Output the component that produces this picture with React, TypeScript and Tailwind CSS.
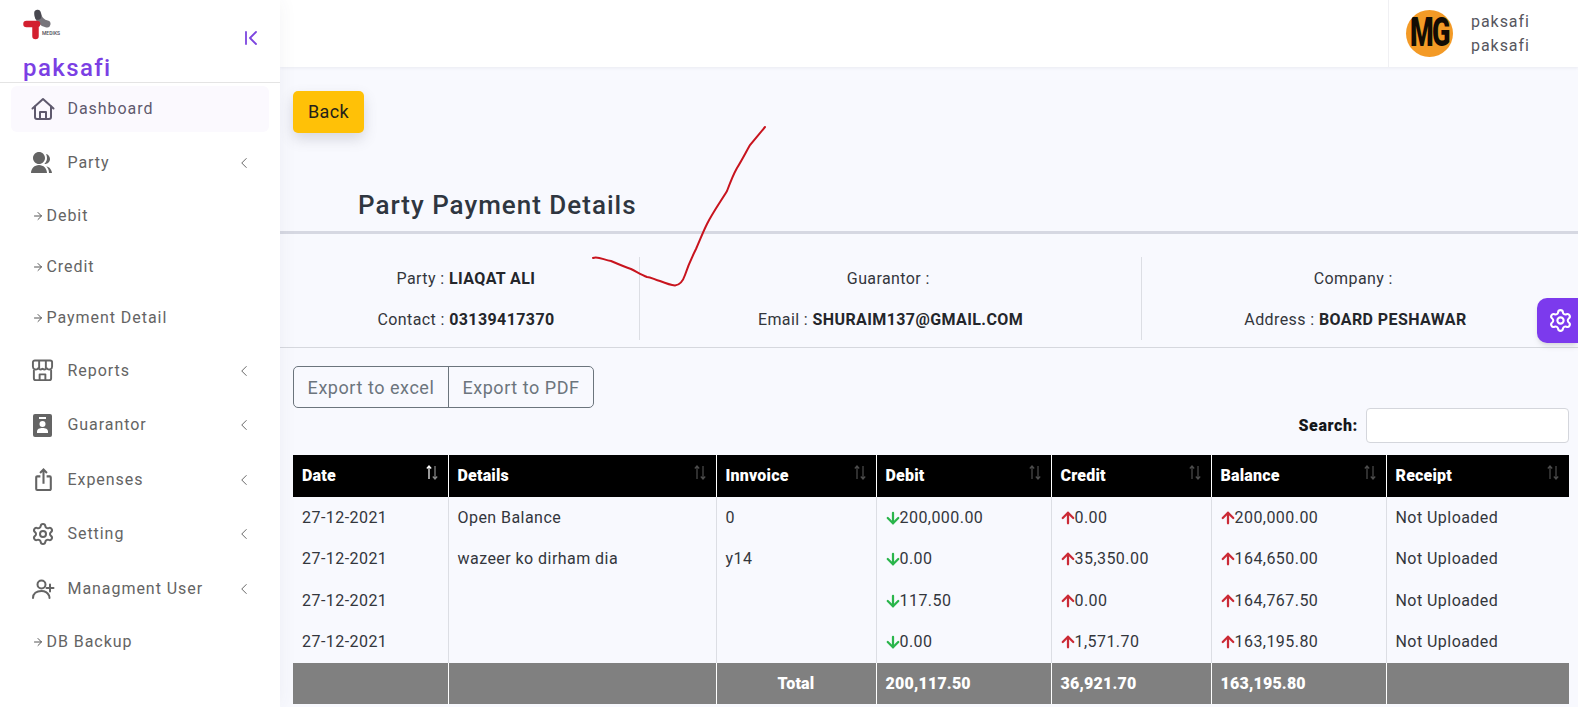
import React from "react";
import { ChevronFirst, ChevronLeft, ArrowRight, ArrowUp, ArrowDown, Settings } from "lucide-react";
import { RiGroupFill } from "react-icons/ri";
import { MdIosShare } from "react-icons/md";

const HomeIcon = () => (
  <svg width="24" height="24" viewBox="0 0 24 24" fill="none" stroke="currentColor" strokeWidth="2" strokeLinejoin="round" strokeLinecap="round">
    <path d="M1.5 11.5 12 2l10.5 9.5" />
    <path d="M4 9.5V20a2 2 0 0 0 2 2h12a2 2 0 0 0 2-2V9.5" />
    <path d="M9 22v-7h6v7" />
  </svg>
);

const StoreIcon = () => (
  <svg width="23" height="23" viewBox="0 0 24 24" fill="none" stroke="currentColor" strokeWidth="2" strokeLinejoin="round" strokeLinecap="round">
    <path d="M4 1.5h16a2 2 0 0 1 2 2V8a3 3 0 0 1-5.5 1.6 3.4 3.4 0 0 1-4.5.6 3.4 3.4 0 0 1-4.5-.6A3 3 0 0 1 2 8V3.5a2 2 0 0 1 2-2z" />
    <path d="M8.5 2v7M15.5 2v7" />
    <path d="M3 12v8a2 2 0 0 0 2 2h14a2 2 0 0 0 2-2v-8" />
    <path d="M9 22v-6h6v6" />
  </svg>
);

const BadgeIcon = () => (
  <svg width="19" height="23" viewBox="0 0 19 23" className="ml-[2px]">
    <rect width="19" height="23" rx="2" fill="currentColor" />
    <rect x="6" y="3" width="7" height="2" fill="#ffffff" />
    <circle cx="9.5" cy="10" r="3" fill="#ffffff" />
    <path d="M4 19v-1.5C4 15 6.500 14 9.500 14s5.500 1 5.500 3.500V19z" fill="#ffffff" />
  </svg>
);

const UserPlusIcon = () => (
  <svg width="24" height="20" viewBox="0 0 24 20" fill="none" stroke="currentColor" strokeWidth="2" strokeLinecap="round">
    <circle cx="10.500" cy="5.500" r="4" />
    <path d="M2 19c0-4.500 3.500-7 8.500-7 3.500 0 6 1.500 7.500 4.500.3.800.5 1.500.5 2.500" />
    <path d="M15.500 9h7M19 5.500v7" />
  </svg>
);

const Main = ({ icon, label, active }: { icon: React.ReactNode; label: string; active?: boolean }) => (
  <div className={`flex items-center ${active ? "mx-[11px] mb-[4px] h-[46px] rounded-md bg-[#fbf9fe] px-[20px] text-[#5f5a6e]" : "h-[54.5px] px-[31px] text-[#646464]"}`}>
    <span className="flex w-[36.5px] shrink-0 items-center">{icon}</span>
    <span className="flex-1 text-[16px] tracking-[0.95px]">{label}</span>
    {!active && <ChevronLeft size={18} strokeWidth={1.3} className="mr-[-4px]" />}
  </div>
);

const Sub = ({ label }: { label: string }) => (
  <div className="flex h-[51px] items-center pl-[32px] text-[16px] tracking-[0.95px] text-[#646464]">
    <ArrowRight size={12} strokeWidth={2} className="mr-[2.5px] text-[#555555]" />
    {label}
  </div>
);

const Info = ({ a, b, c, d, last }: { a: string; b: string; c: string; d: string; last?: boolean }) => (
  <div className={`flex h-[83px] flex-col items-center pt-[1px] text-[16px] tracking-[0.4px] text-[#33363c] ${last ? "" : "border-r border-[#dcdee4]"}`}>
    <div className="flex h-[41px] items-center">{a}&nbsp;<b className="font-bold text-[#24262b]">{b}</b></div>
    <div className="flex h-[41px] items-center pt-[1px]">{c}&nbsp;<b className="font-bold text-[#24262b]">{d}</b></div>
  </div>
);

const Sort = ({ on }: { on?: boolean }) => (
  <svg width="14" height="15" viewBox="0 0 14 15" fill="none" strokeWidth="1.2" className="absolute right-[9px] top-[10px]">
    <path d="M4 14V1M1.800 3.500 4 1l2.200 2.500" stroke={on ? "#ffffff" : "#4d4d4d"} />
    <path d="M10 1v13M7.800 11.500 10 14l2.200-2.500" stroke={on ? "#8a8a8a" : "#4d4d4d"} />
  </svg>
);

const Val = ({ up, v }: { up?: boolean; v: string }) => (
  <span className="flex items-center">
    {up ? <ArrowUp size={18} strokeWidth={3} className="ml-[-2px] mr-[-2px] text-[#cb2a36]" /> : <ArrowDown size={18} strokeWidth={3} className="ml-[-2px] mr-[-2px] text-[#2ab54b]" />}
    {v}
  </span>
);

const heads = ["Date", "Details", "Innvoice", "Debit", "Credit", "Balance", "Receipt"];
const rows = [
  ["Open Balance", "0", "200,000.00", "0.00", "200,000.00"],
  ["wazeer ko dirham dia", "y14", "0.00", "35,350.00", "164,650.00"],
  ["", "", "117.50", "0.00", "164,767.50"],
  ["", "", "0.00", "1,571.70", "163,195.80"],
];

export default function App() {
  return (
    <div className="relative flex h-[707px] w-[1578px] overflow-hidden bg-[#f8f9fe] font-['Roboto',sans-serif]">
      <aside className="z-10 w-[280px] shrink-0 bg-white shadow-[0_0_18px_rgba(60,60,90,0.06)]">
        <div className="flex h-[83px] justify-between border-b border-[#e4e4e4] pl-[23px] pr-[17px]">
          <div className="flex flex-col">
            <svg width="38" height="32" viewBox="0 0 38 32" fill="none" className="mt-[9px]" strokeLinecap="round">
              <path d="M15 6C16 11 19.500 14 24 15" stroke="#77757b" strokeWidth="7" />
              <path d="M14.500 4 15 7.500" stroke="#48484f" strokeWidth="6.500" />
              <path d="M3.500 15H14" stroke="#d3202f" strokeWidth="6.500" />
              <path d="M12.500 16V27" stroke="#d3202f" strokeWidth="6.500" />
              <text x="19" y="26" fontSize="5" fontWeight="500" fill="#4b4b55" fontFamily="Roboto, sans-serif">MEDIKS</text>
            </svg>
            <span className="mt-[13px] text-[24px] leading-[28px] font-medium tracking-[1.4px] text-[#7b3fe4]">paksafi</span>
          </div>
          <ChevronFirst size={24} strokeWidth={1.8} className="mt-[26px] text-[#7c45df]" />
        </div>
        <nav className="pt-[3px] text-[#646464]">
          <Main active icon={<HomeIcon />} label="Dashboard" />
          <Main icon={<RiGroupFill size={24} className="-ml-[2px]" />} label="Party" />
          <Sub label="Debit" />
          <Sub label="Credit" />
          <Sub label="Payment Detail" />
          <Main icon={<StoreIcon />} label="Reports" />
          <Main icon={<BadgeIcon />} label="Guarantor" />
          <Main icon={<MdIosShare size={25} />} label="Expenses" />
          <Main icon={<Settings size={24} strokeWidth={2} />} label="Setting" />
          <Main icon={<UserPlusIcon />} label="Managment User" />
          <Sub label="DB Backup" />
        </nav>
      </aside>

      <main className="min-w-0 flex-1">
        <header className="flex h-[67px] justify-end bg-white shadow-[0_1px_3px_rgba(60,60,90,0.08)]">
          <div className="flex w-[190px] items-center border-l border-[#f0f0f3] pl-[17px]">
            <div className="flex h-[47px] w-[47px] items-center justify-center overflow-hidden rounded-full bg-[#f39a26]">
              <span className="scale-y-[1.5] text-[27px] leading-none font-black tracking-[-1.5px] text-[#120c04]">MG</span>
            </div>
            <div className="ml-[18px] text-[16px] leading-[24px] tracking-[0.95px] text-[#56565e]">
              <div>paksafi</div>
              <div>paksafi</div>
            </div>
          </div>
        </header>

        <div className="pl-[13px] pt-[24px]">
          <button className="h-[42px] w-[71px] rounded-[5px] bg-[#ffc107] pb-[1px] text-[18px] tracking-[0.4px] text-[#25211a] shadow-[0_6px_14px_rgba(80,80,100,0.2)]">Back</button>
        </div>
        <h1 className="mt-[50px] h-[44px] pl-[78px] text-[26px] leading-[44px] font-medium tracking-[1px] text-[#2f3640]">Party Payment Details</h1>
        <div className="mt-[4px] h-[3px] bg-[#d6d8e2]" />

        <div className="border-b border-[#d6d8de] pb-[7px] pl-[13px] pr-[9px] pt-[23px]">
          <div className="grid grid-cols-[347px_502px_427px]">
            <Info a="Party :" b="LIAQAT ALI" c="Contact :" d="03139417370" />
            <Info a="Guarantor :" b="" c="Email :" d="SHURAIM137@GMAIL.COM" />
            <Info last a="Company :" b="" c="Address :" d="BOARD PESHAWAR" />
          </div>
        </div>

        <div className="pl-[13px] pr-[9px] pt-[18px]">
          <div className="flex h-[42px] w-[301px] rounded-[5px] border border-[#6c757d] text-[18px] tracking-[0.55px] text-[#6c757d]">
            <div className="flex w-[155px] items-center justify-center border-r border-[#6c757d]">Export to excel</div>
            <div className="flex flex-1 items-center justify-center">Export to PDF</div>
          </div>
          <div className="flex h-[35px] items-center justify-end">
            <span className="mr-[8px] text-[16px] font-black tracking-[0.6px] text-[#14161a]">Search:</span>
            <input className="h-[35px] w-[203px] rounded border border-[#d4d6dc] bg-white" />
          </div>

          <table className="mt-[12px] w-[1276px] table-fixed border-collapse text-[16px] tracking-[0.45px] text-[#33363c]">
            <colgroup>
              <col className="w-[155px]" />
              <col className="w-[268px]" />
              <col className="w-[160px]" />
              <col className="w-[175px]" />
              <col className="w-[160px]" />
              <col className="w-[175px]" />
              <col className="w-[183px]" />
            </colgroup>
            <thead>
              <tr className="h-[42px] bg-black text-white">
                {heads.map((h, i) => (
                  <th key={h} className="relative border-l border-white px-[9px] text-left font-black tracking-[0.2px] first:border-l-0">
                    {h}
                    <Sort on={i === 0} />
                  </th>
                ))}
              </tr>
            </thead>
            <tbody>
              {rows.map((r, i) => (
                <tr key={i} className="h-[41.5px]">
                  <td className="px-[9px]">27-12-2021</td>
                  <td className="border-l border-[#dcdee4] px-[9px]">{r[0]}</td>
                  <td className="border-l border-[#dcdee4] px-[9px]">{r[1]}</td>
                  <td className="border-l border-[#dcdee4] px-[9px]"><Val v={r[2]} /></td>
                  <td className="border-l border-[#dcdee4] px-[9px]"><Val up v={r[3]} /></td>
                  <td className="border-l border-[#dcdee4] px-[9px]"><Val up v={r[4]} /></td>
                  <td className="border-l border-[#dcdee4] px-[9px]">Not Uploaded</td>
                </tr>
              ))}
              <tr className="h-[41px] bg-[#808080] text-white">
                <td />
                <td className="border-l border-white" />
                <td className="border-l border-white text-center font-black tracking-[0.2px]">Total</td>
                <td className="border-l border-white px-[9px] font-black tracking-[0.2px]">200,117.50</td>
                <td className="border-l border-white px-[9px] font-black tracking-[0.2px]">36,921.70</td>
                <td className="border-l border-white px-[9px] font-black tracking-[0.2px]">163,195.80</td>
                <td className="border-l border-white" />
              </tr>
            </tbody>
          </table>
        </div>
      </main>

      <div className="absolute right-0 top-[298px] z-20 flex h-[45px] w-[41px] items-center justify-center rounded-l-[10px] bg-[#7c3aed] pl-[6px] text-white shadow-md">
        <Settings size={25} strokeWidth={2} />
      </div>

      <svg className="pointer-events-none absolute left-0 top-0 z-30" width="1578" height="707" fill="none">
        <path
          d="M593 258 C598 256 604 260 611 261 C618 264 625 267 631 269 C637 272 642 275 647 277 C651 277 655 280 660 281 C665 283 670 285 675 285.500 C680 285 683 281 685 275 C688 266 692 257 696 249 C700 240 703 232 707 224 C713 212 721 201 727 191 C730 183 733 175 737 168 C742 160 746 152 750 145 C755 139 760 133 765 127"
          stroke="#c8141e"
          strokeWidth="2"
          strokeLinecap="round"
        />
      </svg>
    </div>
  );
}
